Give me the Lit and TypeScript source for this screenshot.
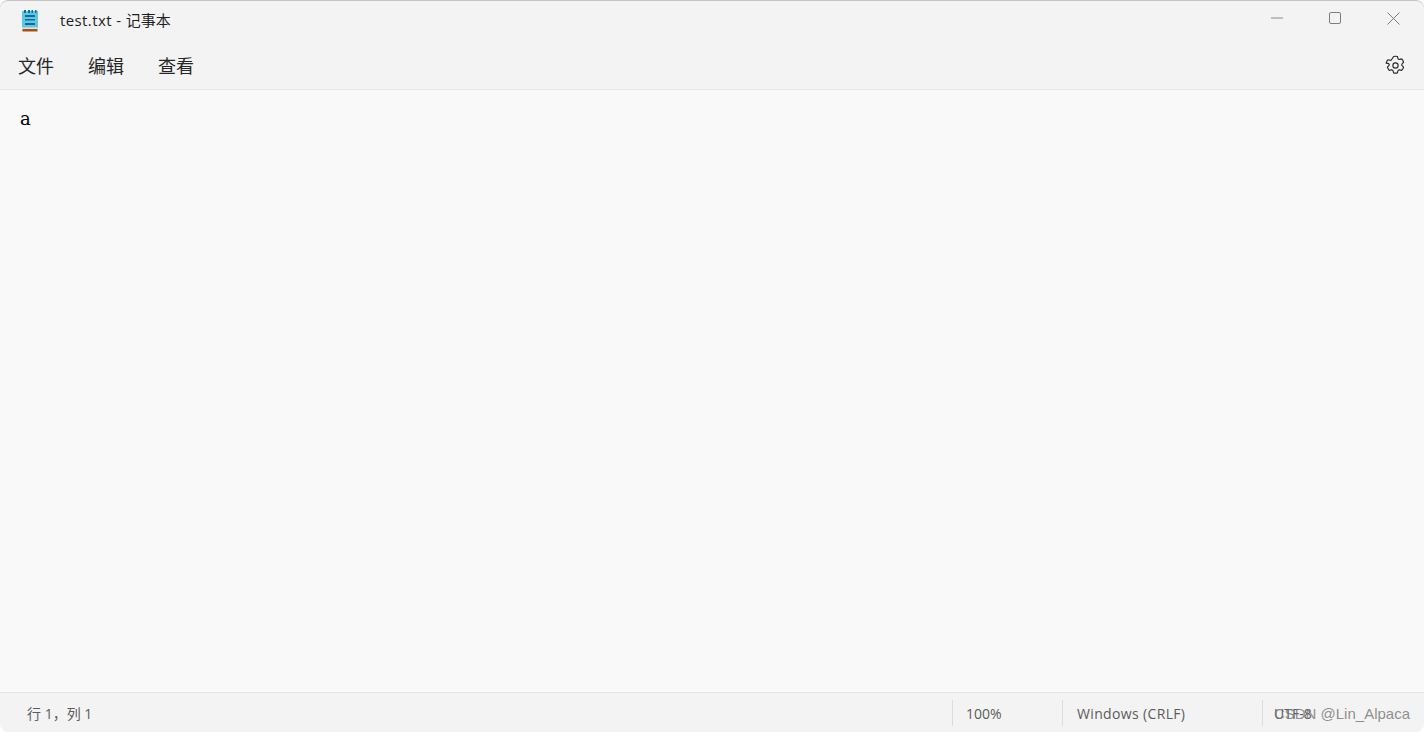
import { LitElement, html, css } from "lit";
import { customElement } from "lit/decorators.js";

@customElement("app-root")
export class AppRoot extends LitElement {
  static styles = css`
    :host {
      display: block;
      width: 1424px;
      height: 732px;
      background: #ffffff;
      font-family: "Noto Sans CJK SC", "Open Sans", sans-serif;
    }
    .win {
      box-sizing: border-box;
      width: 1424px;
      height: 732px;
      display: flex;
      flex-direction: column;
      background: #f3f3f3;
      border-radius: 8px;
      border-top: 1px solid #c4c4c4;
      overflow: hidden;
      position: relative;
    }
    .title {
      height: 39px;
      display: flex;
      align-items: flex-start;
      padding: 8px 0 0 21px;
      box-sizing: border-box;
      flex: none;
    }
    .logo { width: 18px; height: 22px; flex: none; margin-top: 1px; }
    .title-text {
      margin-left: 21px;
      font-size: 15px;
      line-height: 22px;
      color: #1f1f1f;
      font-family: "Open Sans", "Noto Sans CJK SC", sans-serif;
    }
    .latin { letter-spacing: 0.4px; }
    .ctrls { margin-left: auto; display: flex; padding: 1px 2px 0 0; }
    .ctrl { width: 58px; height: 16px; display: flex; align-items: center; justify-content: center; }
    .ctrl svg { display: block; }
    .menu {
      height: 50px;
      display: flex;
      align-items: center;
      flex: none;
      padding: 0 18px;
      gap: 34px;
      border-bottom: 1px solid #e5e5e5;
      box-sizing: border-box;
    }
    .menu span { font-size: 18px; color: #262626; }
    .gear { margin: 1px 0 0 auto; width: 21px; height: 21px; }
    .doc {
      flex: 1;
      background: #f9f9f9;
      padding: 17px 20px;
      font-family: "DejaVu Serif", serif;
      font-size: 18px;
      line-height: 24px;
      color: #000;
    }
    .status {
      height: 40px;
      flex: none;
      display: flex;
      align-items: center;
      padding-top: 1px;
      border-top: 1px solid #e5e5e5;
      box-sizing: border-box;
      font-size: 14px;
      color: #5c5c5c;
      font-family: "Open Sans", "Noto Sans CJK SC", sans-serif;
    }
    .cell { height: 26px; display: flex; align-items: center; box-sizing: border-box; }
    .pos { padding-left: 27px; flex: 1; }
    .zoom { width: 110px; padding-left: 13px; border-left: 1px solid #dcdcdc; }
    .eol { width: 200px; padding-left: 14px; border-left: 1px solid #dcdcdc; letter-spacing: 0.35px; }
    .enc { width: 162px; padding-left: 11px; border-left: 1px solid #dcdcdc; }
    .wm {
      position: absolute;
      right: 14px;
      bottom: 8px;
      font-family: "Liberation Sans", sans-serif;
      font-size: 15px;
      line-height: 20px;
      color: rgba(115, 115, 115, 0.8);
    }
  `;

  render() {
    return html`
      <div class="win">
        <div class="title">
          <svg class="logo" viewBox="0 0 18 22">
            <rect x="1" y="1" width="16" height="17" fill="#5fc6e8" />
            <rect x="1" y="17.500" width="16" height="1.500" fill="#e8e4dc" />
            <rect x="1.500" y="19" width="15" height="2.500" fill="#a8500f" />
            <path d="M3 0h2v3H3zM7 0h2v3H7zM10.500 0h1.500v3h-1.500zM14 0h1.500v3H14z" fill="#0f6c94" />
            <path d="M4 5h10v2H4zM4 9h10v1.500H4zM4 13h10v2H4z" fill="#0f6c94" />
          </svg>
          <span class="title-text"><span class="latin">test.txt - </span>记事本</span>
          <div class="ctrls">
            <div class="ctrl">
              <svg width="14" height="2" viewBox="0 0 14 2"><path d="M1 1h12" stroke="#8a8a8a" stroke-width="1" /></svg>
            </div>
            <div class="ctrl">
              <svg width="12" height="12" viewBox="0 0 12 12"><rect x=".5" y=".5" width="11" height="11" rx="1.500" fill="none" stroke="#7d7d7d" /></svg>
            </div>
            <div class="ctrl">
              <svg width="13" height="13" viewBox="0 0 13 13"><path d="M.5.5l12 12M12.500.5l-12 12" stroke="#7d7d7d" fill="none" /></svg>
            </div>
          </div>
        </div>
        <div class="menu">
          <span>文件</span><span>编辑</span><span>查看</span>
          <svg class="gear" viewBox="0 0 20 20" fill="none" stroke="#2a2a2a" stroke-width="1.100" stroke-linejoin="round">
            <path d="M8.200 1.400c1.200-.3 2.400-.3 3.600 0l.5 1.800c.2.700 1 1.200 1.800 1l1.800-.5c.8.900 1.500 2 1.800 3.200l-1.300 1.300c-.6.500-.6 1.500 0 2l1.300 1.300c-.3 1.200-1 2.300-1.800 3.200l-1.800-.5c-.8-.2-1.600.3-1.800 1l-.5 1.800c-1.200.3-2.400.3-3.600 0l-.5-1.800c-.2-.7-1-1.200-1.800-1l-1.800.5c-.8-.9-1.500-2-1.800-3.200l1.300-1.300c.6-.5.6-1.500 0-2L1.100 7.700c.3-1.200 1-2.300 1.800-3.200l1.800.5c.8.200 1.600-.3 1.800-1z" />
            <circle cx="10" cy="10" r="2.500" />
          </svg>
        </div>
        <div class="doc">a</div>
        <div class="status">
          <div class="cell pos">行 1，列 1</div>
          <div class="cell zoom">100%</div>
          <div class="cell eol">Windows (CRLF)</div>
          <div class="cell enc">UTF-8</div>
        </div>
        <div class="wm">CSDN @Lin_Alpaca</div>
      </div>
    `;
  }
}
